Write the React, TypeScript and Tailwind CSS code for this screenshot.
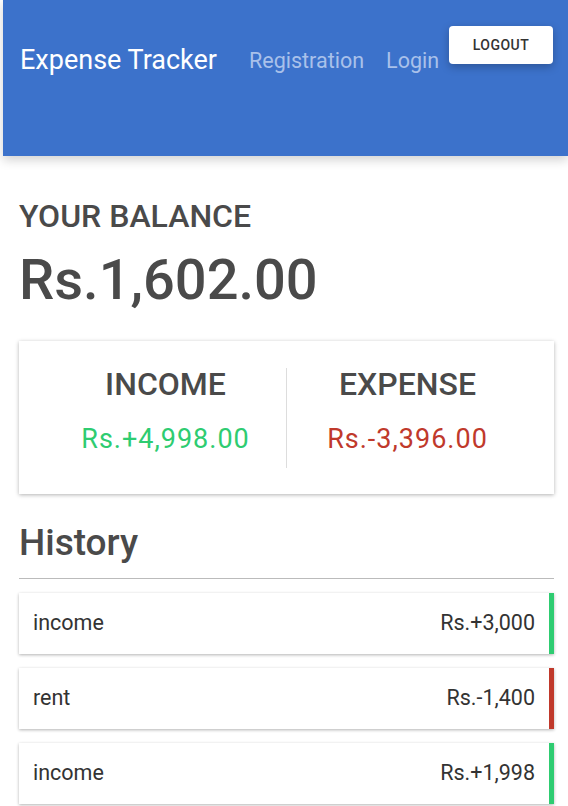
const items = [
  { text: "income", amount: "Rs.+3,000", plus: true },
  { text: "rent", amount: "Rs.-1,400", plus: false },
  { text: "income", amount: "Rs.+1,998", plus: true },
];

export default function App() {
  return (
    <div className="min-h-screen bg-white font-['Roboto',sans-serif] text-[#4a4a4a]">
      <header className="ml-[3px] h-[156px] bg-[#3c72cb] shadow-[0_4px_10px_rgba(0,0,0,0.18)] flex items-start pl-[17px] pr-[15px]">
        <div className="mt-[47px] text-[27px] text-white leading-none">Expense Tracker</div>
        <nav className="flex ml-[32px] mt-[50px] gap-[22px] text-[21.5px] leading-none text-[#a9c1ea]">
          <span>Registration</span>
          <span>Login</span>
        </nav>
        <button className="ml-auto mt-[26px] w-[104px] h-[38px] bg-white rounded-[4px] text-[14px] font-medium tracking-[0.5px] text-[#333] shadow-[0_3px_8px_rgba(0,0,0,0.25)]">
          LOGOUT
        </button>
      </header>

      <main className="px-[19px] pr-[14px]">
        <h4 className="mt-[44px] text-[32px] font-medium leading-none">YOUR BALANCE</h4>
        <h1 className="mt-[20px] text-[56px] font-medium leading-none">Rs.1,602.00</h1>

        <div className="mt-[33px] h-[153px] bg-white shadow-[0_1px_4px_rgba(0,0,0,0.3)] flex items-start px-[26px] pt-[27px]">
          <div className="flex-1 text-center">
            <h4 className="text-[32px] font-medium leading-none">INCOME</h4>
            <p className="mt-[26px] text-[27px] tracking-[1px] leading-none text-[#2ecc71]">Rs.+4,998.00</p>
          </div>
          <div className="w-px h-[100px] bg-[#ddd]" />
          <div className="flex-1 text-center">
            <h4 className="text-[32px] font-medium leading-none">EXPENSE</h4>
            <p className="mt-[26px] text-[27px] tracking-[1px] leading-none text-[#c0392b]">Rs.-3,396.00</p>
          </div>
        </div>

        <h3 className="mt-[30px] text-[37px] font-medium leading-none pb-[17px] border-b border-[#bbb]">History</h3>

        <ul className="mt-[14px] flex flex-col gap-[14px]">
          {items.map((it, i) => (
            <li
              key={i}
              className={
                "h-[61px] bg-white shadow-[0_1px_3px_rgba(0,0,0,0.3)] flex items-center justify-between pl-[14px] pr-[14px] text-[21.5px] text-[#333] border-r-[5px] " +
                (it.plus ? "border-[#2ecc71]" : "border-[#c0392b]")
              }
            >
              <span>{it.text}</span>
              <span>{it.amount}</span>
            </li>
          ))}
        </ul>
      </main>
    </div>
  );
}
